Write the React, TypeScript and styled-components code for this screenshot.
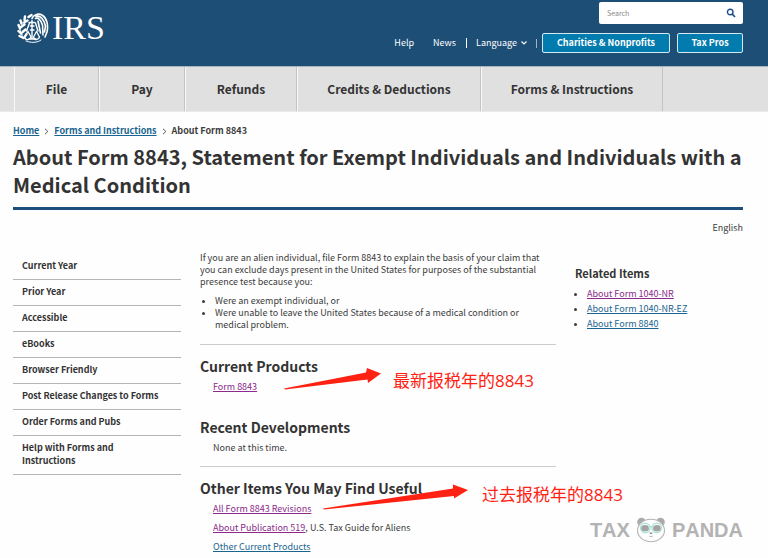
import React from "react";
import styled, { createGlobalStyle } from "styled-components";

const Global = createGlobalStyle`
  * { box-sizing: border-box; }
  body {
    margin: 0;
    background: #fefefe;
    color: #3c3c3c;
    font-family: "Noto Sans CJK SC", "Open Sans", sans-serif;
    font-size: 9px;
    line-height: 12px;
  }
  h1, h2, h3, p, ul, ol { margin: 0; padding: 0; }
  h1, h2, h3 { color: #333; }
`;

const Header = styled.header`
  display: flex;
  justify-content: space-between;
  height: 66px;
  padding: 2px 25px 0 17px;
  background: #1d4e76;
  color: #fff;
`;

const Logo = styled.a`
  display: flex;
  align-items: center;
  align-self: flex-start;
  gap: 3px;
  margin-top: 9px;
  color: #fff;
  font: 34px/34px "Liberation Serif", serif;
  text-decoration: none;
`;

const Tools = styled.div`
  display: flex;
  flex-direction: column;
  align-items: flex-end;
  gap: 9px;
`;

const SearchBox = styled.form`
  display: flex;
  align-items: center;
  width: 144px;
  height: 22px;
  padding: 0 7px 0 8px;
  border-radius: 2px;
  background: #fff;
`;

const SearchInput = styled.input`
  flex: 1;
  min-width: 0;
  padding: 0;
  border: 0;
  outline: 0;
  background: none;
  color: #333;
  font: 7px/12px "Noto Sans CJK SC", sans-serif;
  &::placeholder { color: #888; opacity: 1; }
`;

const IconButton = styled.button`
  display: flex;
  padding: 0;
  border: 0;
  background: none;
  color: #1d5089;
`;

const Utility = styled.nav`
  display: flex;
  align-items: center;
`;

const UtilityLink = styled.a`
  margin-right: 19px;
  color: #fff;
  text-decoration: none;
`;

const LanguageButton = styled.button`
  display: flex;
  align-items: center;
  gap: 4px;
  margin: 0 9px 0 -9px;
  padding: 0 0 0 9px;
  border: 0;
  border-left: 1px solid #fff;
  background: none;
  color: #fff;
  font: 9px/10px "Noto Sans CJK SC", sans-serif;
`;

const PillLink = styled.a<{ $wide?: boolean }>`
  width: ${(p) => (p.$wide ? 128 : 66)}px;
  margin-left: ${(p) => (p.$wide ? 5 : 7)}px;
  border: 1px solid #d5e8f0;
  border-radius: 2px;
  background: #027bae;
  color: #fff;
  font-weight: 700;
  line-height: 18px;
  text-align: center;
  text-decoration: none;
`;

const Divider = styled.span`
  width: 1px;
  height: 9px;
  background: #9db4c6;
`;

const MainNav = styled.nav`
  display: flex;
  height: 46px;
  padding-left: 14px;
  border-top: 1px solid #a9b5c0;
  border-bottom: 1px solid #e9e9e9;
  background: #e0e0e0;
`;

const NavItem = styled.a<{ $basis: number }>`
  flex: 0 1 ${(p) => p.$basis}px;
  border-left: 1px solid #f8f8f8;
  border-right: 1px solid #c4c4c4;
  color: #333;
  font-size: 12px;
  font-weight: 700;
  line-height: 43px;
  text-align: center;
  text-decoration: none;
  white-space: nowrap;
`;

const Page = styled.main`
  padding: 13px 25px 0 13px;
`;

const Crumbs = styled.ol`
  display: flex;
  align-items: center;
  gap: 5px;
  font-weight: 700;
  list-style: none;
`;

const Crumb = styled.li`
  display: flex;
  align-items: center;
  gap: 5px;
`;

const Link = styled.a<{ $visited?: boolean }>`
  color: ${(p) => (p.$visited ? "#8b2a8b" : "#1a658f")};
  text-decoration: underline;
  text-underline-offset: 1px;
`;

const Title = styled.h1`
  padding: 6px 0 8px;
  border-bottom: 3px solid #1d4e7c;
  font-size: 20px;
  font-weight: 700;
  line-height: 28px;
`;

const Locale = styled.p`
  margin-top: 12px;
  text-align: right;
`;

const Columns = styled.div`
  display: grid;
  grid-template-columns: 168fr 356fr 168fr;
  gap: 19px;
  margin-top: 18px;
`;

const SideList = styled.ul`
  margin-top: 2px;
  list-style: none;
`;

const SideItem = styled.li`
  padding: 5px 9px 7px;
  border-bottom: 1px solid #b5b5b5;
  font-weight: 700;
  line-height: 13px;
  &:last-child { padding-right: 40px; }
`;

const SideLink = styled.a`
  color: #333;
  text-decoration: none;
`;

const Bullets = styled.ul<{ $loose?: boolean }>`
  margin: ${(p) => (p.$loose ? 6 : 7)}px 0 13px;
  padding: 0 15px 0 ${(p) => (p.$loose ? 12 : 15)}px;
  line-height: ${(p) => (p.$loose ? 15 : 12)}px;
`;

const Section = styled.section<{ $ruled?: boolean }>`
  position: relative;
  margin-top: 12px;
  padding-top: 11px;
  border-top: 1px solid ${(p) => (p.$ruled ? "#ccc" : "transparent")};
`;

const SectionTitle = styled.h2`
  font-size: 14px;
  font-weight: 700;
  line-height: 20px;
`;

const Entry = styled.p`
  margin: 5px 0 7px 13px;
`;

const Note = styled.div<{ $top: number; $left: number; $gap: number }>`
  position: absolute;
  top: ${(p) => p.$top}px;
  left: ${(p) => p.$left}px;
  display: flex;
  align-items: center;
  gap: ${(p) => p.$gap}px;
  color: #ff2213;
  font: 17px/24px "Open Sans", "Noto Sans CJK SC", sans-serif;
  white-space: nowrap;
`;

const Aside = styled.aside`
  display: flex;
  flex-direction: column;
  padding: 14px 0 16px;
`;

const AsideTitle = styled.h3`
  font-size: 11px;
  line-height: 14px;
`;

const Watermark = styled.div`
  display: flex;
  align-items: center;
  align-self: flex-end;
  gap: 6px;
  margin-top: auto;
  color: #b3b3b3;
  font: 700 20px/28px "Liberation Sans", sans-serif;
  font-kerning: none;
`;

const Eagle = () => (
  <svg width="32" height="30" viewBox="0 0 32 30" fill="none" stroke="#fff" strokeLinecap="round" aria-hidden="true">
    <path d="M10 27C6 25 3 21 3 15" strokeWidth="1" />
    <path d="M4.5 21L1.5 18M6.5 25L2.5 23M3 15.5L1.5 12M4.5 10.5L3.5 7.5M7.5 7L8 3.5M11.5 4L14.5 2M5.5 19L8.5 16.5M4 14L7.5 11.5M7 9.5L10.5 7.5M8 23.5L9.5 21" strokeWidth="2.4" />
    <path d="M12 9.5H18M15 7.5V25M12.5 10L9.5 18M18.5 10L21 18M12 26H19M13.5 13H17M13.5 17H17" strokeWidth="1.4" />
    <path d="M7.5 24C9 28 13 27 14 24L11 18.5ZM16.5 24C17.5 28 21.5 27 22.5 24L19.5 18.5Z" strokeWidth="1.3" />
    <path d="M15 5.5C16 2 21 0 25 2C30 5 31.5 12 30 19L28 24M18.5 5.5C21 4 24 7 25.5 12L26 22M19 3.5C23 2 27 6 28.5 13L27.5 19M21 8L23.5 20" strokeWidth="1.6" />
    <path d="M9 28C14 30 20 30 24 27" strokeWidth="1" />
  </svg>
);

const SearchIcon = () => (
  <svg width="10" height="10" viewBox="0 0 10 10" fill="none" stroke="currentColor" aria-hidden="true">
    <circle cx="4.2" cy="4" r="2.8" strokeWidth="1.4" />
    <path d="M6.3 6.2L9 9" strokeWidth="1.7" />
  </svg>
);

const Chevron = () => (
  <svg width="6" height="4" viewBox="0 0 6 4" fill="none" stroke="currentColor" aria-hidden="true">
    <path d="M.5 .5L3 3L5.5 .5" strokeWidth="1.2" />
  </svg>
);

const CrumbArrow = () => (
  <svg width="5" height="7" viewBox="0 0 5 7" fill="none" stroke="#555" aria-hidden="true">
    <path d="M1 .8L3.8 3.5L1 6.2" />
  </svg>
);

const ShortArrow = () => (
  <svg width="97" height="30" viewBox="0 0 97 30" fill="#ff2213" aria-hidden="true">
    <path d="M0 22.5L82 6.5L83 2L97 7.5L84 17L83.5 13.5L1 23.5Z" />
  </svg>
);

const LongArrow = () => (
  <svg width="145" height="32" viewBox="0 -4 145 32" fill="#ff2213" aria-hidden="true">
    <path d="M0 25.5L130 5.5L130 1.5L145 7L131 15.5L131 13L1 26.5Z" />
  </svg>
);

const Panda = () => (
  <svg width="30" height="26" viewBox="0 0 30 26" aria-hidden="true">
    <g fill="#aaa"><circle cx="5.5" cy="5" r="4.3" /><circle cx="24.5" cy="5" r="4.3" /></g>
    <ellipse cx="15" cy="13.5" rx="13.5" ry="11.2" fill="#fefefe" stroke="#b3b3b3" strokeWidth="1.1" />
    <g fill="#fefefe" stroke="#a5e2d8" strokeWidth="1.2"><circle cx="9.3" cy="11" r="4.8" /><circle cx="20.7" cy="11" r="4.8" /></g>
    <g fill="#a3a3a3"><ellipse cx="9.1" cy="11.3" rx="3.8" ry="3.3" /><ellipse cx="20.9" cy="11.3" rx="3.8" ry="3.3" /></g>
    <path d="M13.8 10Q15 8.8 16.2 10" fill="none" stroke="#a5e2d8" strokeWidth="1.2" />
    <ellipse cx="15" cy="16.3" rx="1.5" ry="1" fill="#999" />
    <path d="M13 19Q15 20.5 17 19" fill="none" stroke="#bbb" />
  </svg>
);

const NAV: [string, number][] = [
  ["File", 85],
  ["Pay", 86],
  ["Refunds", 112],
  ["Credits & Deductions", 184],
  ["Forms & Instructions", 182],
];

const SIDE = [
  "Current Year",
  "Prior Year",
  "Accessible",
  "eBooks",
  "Browser Friendly",
  "Post Release Changes to Forms",
  "Order Forms and Pubs",
  "Help with Forms and Instructions",
];

export default function App() {
  return (
    <>
      <Global />
      <Header>
        <Logo href="#"><Eagle />IRS</Logo>
        <Tools>
          <SearchBox>
            <SearchInput type="text" placeholder="Search" aria-label="Search" />
            <IconButton type="button" aria-label="Submit search"><SearchIcon /></IconButton>
          </SearchBox>
          <Utility aria-label="Utility">
            <UtilityLink href="#">Help</UtilityLink>
            <UtilityLink href="#">News</UtilityLink>
            <LanguageButton type="button">Language<Chevron /></LanguageButton>
            <Divider />
            <PillLink href="#" $wide>Charities &amp; Nonprofits</PillLink>
            <PillLink href="#">Tax Pros</PillLink>
          </Utility>
        </Tools>
      </Header>
      <MainNav aria-label="Main">
        {NAV.map(([label, basis]) => (
          <NavItem key={label} href="#" $basis={basis}>{label}</NavItem>
        ))}
      </MainNav>
      <Page>
        <Crumbs>
          <Crumb><Link href="#">Home</Link><CrumbArrow /></Crumb>
          <Crumb><Link href="#">Forms and Instructions</Link><CrumbArrow /></Crumb>
          <Crumb>About Form 8843</Crumb>
        </Crumbs>
        <Title>About Form 8843, Statement for Exempt Individuals and Individuals with a Medical Condition</Title>
        <Locale>English</Locale>
        <Columns>
          <SideList>
            {SIDE.map((label) => (
              <SideItem key={label}><SideLink href="#">{label}</SideLink></SideItem>
            ))}
          </SideList>
          <article>
            <p>
              If you are an alien individual, file Form 8843 to explain the basis of your claim that you can exclude
              days present in the United States for purposes of the substantial presence test because you:
            </p>
            <Bullets>
              <li>Were an exempt individual, or</li>
              <li>Were unable to leave the United States because of a medical condition or medical problem.</li>
            </Bullets>
            <Section $ruled>
              <SectionTitle>Current Products</SectionTitle>
              <Entry><Link href="#" $visited>Form 8843</Link></Entry>
              <Note $top={21} $left={84} $gap={12}><ShortArrow />最新报税年的8843</Note>
            </Section>
            <Section>
              <SectionTitle>Recent Developments</SectionTitle>
              <Entry>None at this time.</Entry>
            </Section>
            <Section $ruled>
              <SectionTitle>Other Items You May Find Useful</SectionTitle>
              <Entry><Link href="#" $visited>All Form 8843 Revisions</Link></Entry>
              <Entry><Link href="#" $visited>About Publication 519</Link>, U.S. Tax Guide for Aliens</Entry>
              <Entry><Link href="#">Other Current Products</Link></Entry>
              <Note $top={12} $left={123} $gap={14}><LongArrow />过去报税年的8843</Note>
            </Section>
          </article>
          <Aside>
            <AsideTitle>Related Items</AsideTitle>
            <Bullets $loose>
              <li><Link href="#" $visited>About Form 1040-NR</Link></li>
              <li><Link href="#">About Form 1040-NR-EZ</Link></li>
              <li><Link href="#">About Form 8840</Link></li>
            </Bullets>
            <Watermark><span>TAX</span><Panda /><span>PANDA</span></Watermark>
          </Aside>
        </Columns>
      </Page>
    </>
  );
}
